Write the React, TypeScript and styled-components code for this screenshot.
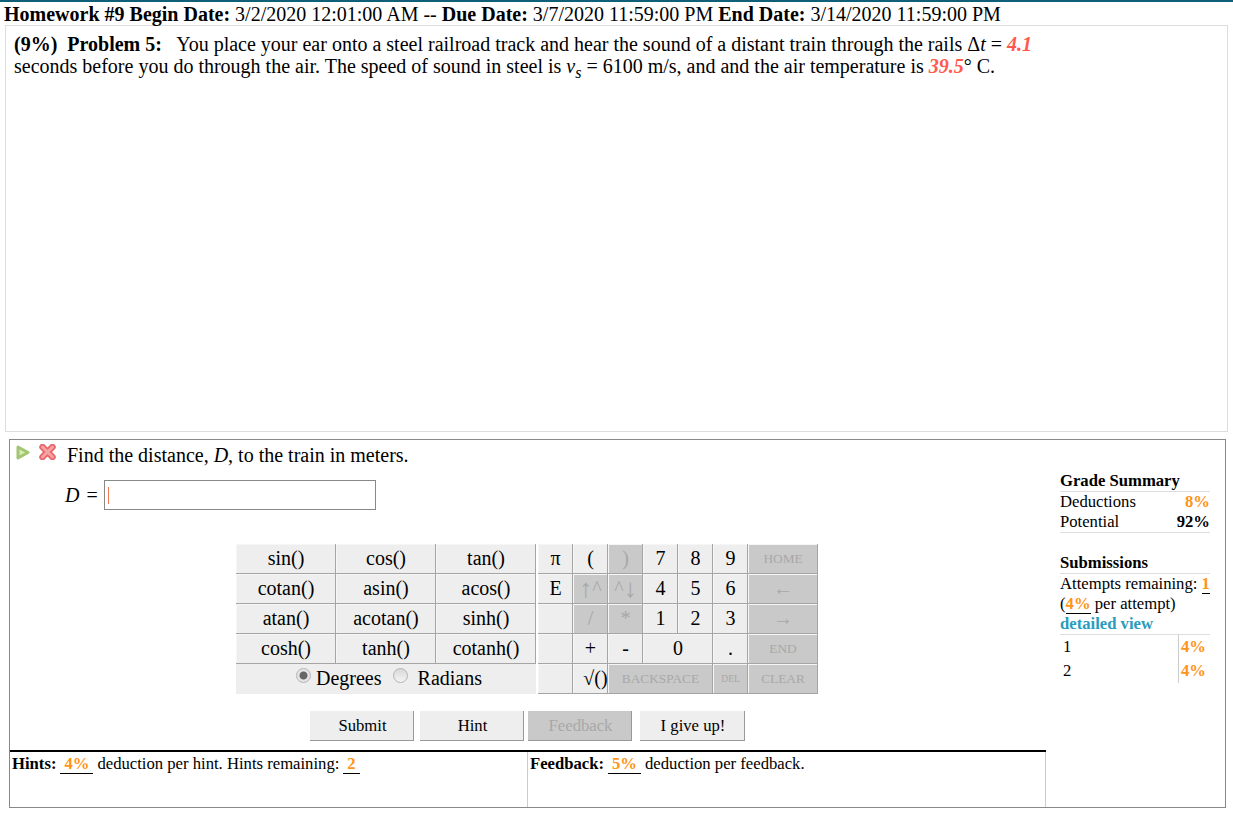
import styled, { createGlobalStyle } from 'styled-components';

const GlobalStyle = createGlobalStyle`
  html, body {
    margin: 0;
    padding: 0;
    background: #fff;
  }
  body {
    font-family: "Liberation Serif", "Times New Roman", serif;
    color: #000;
  }
  * {
    box-sizing: border-box;
  }
`;

const Page = styled.div`
  width: 1233px;
  height: 813px;
  overflow: hidden;
  border-top: 2px solid #0f5f78;
`;

const Header = styled.div`
  height: 23px;
  padding: 1px 0 0 4px;
  font-size: 20px;
  line-height: 22px;
  white-space: nowrap;
`;

const ProblemBox = styled.div`
  width: 1223px;
  height: 407px;
  margin-left: 5px;
  padding: 7px 8px;
  border: 1px solid #ddd;
  font-size: 20px;
  line-height: 22px;
  white-space: nowrap;
`;

const ProblemTitle = styled.b`
  margin-right: 10px;
`;

const Given = styled.b`
  color: #ff5a4d;
  font-style: italic;
`;

const Sub = styled.sub`
  font-size: 16px;
  line-height: 0;
`;

const QuestionBox = styled.div`
  display: flex;
  width: 1217px;
  height: 369px;
  margin: 7px 0 0 9px;
  border: 1px solid #888;
`;

const MainColumn = styled.div`
  display: flex;
  flex-direction: column;
  width: 1036px;
`;

const PromptRow = styled.div`
  display: flex;
  align-items: flex-start;
  height: 40px;
  padding: 4px 0 0 6px;
  font-size: 20px;
  line-height: 22px;
`;

const StatusIcons = styled.div`
  display: flex;
  gap: 9px;
  width: 51px;
`;

const AnswerRow = styled.div`
  display: flex;
  align-items: center;
  height: 30px;
  padding-left: 55px;
  font-size: 20px;
`;

const AnswerLabel = styled.span`
  width: 39px;
  word-spacing: 2px;
`;

const Answer = styled.div`
  display: flex;
  align-items: center;
  width: 272px;
  height: 30px;
  padding-left: 3px;
  border: 1px solid #888;
`;

const Caret = styled.span`
  width: 1px;
  height: 17px;
  background: #f47a52;
`;

const Keypad = styled.div`
  display: grid;
  grid-template-columns: repeat(3, 100px) 2px repeat(6, 35px) 70px;
  grid-auto-rows: 30px;
  width: 582px;
  margin: 34px 0 0 226px;
`;

const Key = styled.div<{ $off?: boolean; $span?: number; $size?: number; $start?: number }>`
  display: flex;
  align-items: center;
  justify-content: center;
  grid-column: ${(p) => (p.$start ? `${p.$start} / span ${p.$span || 1}` : `span ${p.$span || 1}`)};
  padding-left: 1px;
  background: ${(p) => (p.$off ? '#c9c9c9' : '#eee')};
  color: ${(p) => (p.$off ? '#a8a8a8' : '#000')};
  border-right: 1px solid #a5a5a5;
  border-bottom: 1px solid #a5a5a5;
  box-shadow: inset 1px 1px 0 #f6f6f6;
  font-size: ${(p) => p.$size || 20}px;
  white-space: nowrap;
`;

const Arrow = styled.span`
  font-size: 26px;
  line-height: 0;
`;

const RootLabel = styled.span`
  margin-left: 10px;
`;

const AngleCell = styled.div`
  display: flex;
  align-items: center;
  justify-content: center;
  grid-column: span 3;
  padding: 0 0 2px 6px;
  background: #eee;
  font-size: 20px;
`;

const Radio = styled.span<{ $on?: boolean }>`
  display: inline-block;
  width: 15px;
  height: 15px;
  margin: 0 5px 5px 0;
  border-radius: 50%;
  border: 1px solid #b4b4b4;
  background: ${(p) =>
    p.$on
      ? 'radial-gradient(circle, #666 0, #666 3.5px, #e4e4e4 4.5px)'
      : 'linear-gradient(#d8d8d8, #f4f4f4)'};
`;

const AngleLabel = styled.span<{ $gap?: number }>`
  margin-right: ${(p) => p.$gap || 0}px;
`;

const Actions = styled.div`
  display: flex;
  height: 30px;
  margin: 17px 0 0 300px;
`;

const ActionButton = styled.div<{ $off?: boolean; $w: number; $gap: number }>`
  display: flex;
  align-items: center;
  justify-content: center;
  width: ${(p) => p.$w}px;
  margin-right: ${(p) => p.$gap}px;
  padding-left: 2px;
  background: ${(p) => (p.$off ? '#c9c9c9' : '#eee')};
  color: ${(p) => (p.$off ? '#a8a8a8' : '#000')};
  border-right: 1px solid #999;
  border-bottom: 1px solid #999;
  font-size: 16.67px;
`;

const InfoRow = styled.div`
  display: flex;
  flex: 1;
  margin-top: 9px;
  border-top: 2px solid #000;
`;

const InfoCell = styled.div<{ $w: number }>`
  width: ${(p) => p.$w}px;
  padding: 2px 2px 0;
  border-right: 1px solid #ccc;
  font-size: 16.67px;
  line-height: 20px;
  white-space: nowrap;
`;

const Value = styled.span`
  display: inline-block;
  height: 20px;
  margin: 0 4px;
  padding: 0 4px;
  border-bottom: 1px solid #000;
  color: #ff9416;
  font-weight: bold;
  line-height: 20px;
`;

const Sidebar = styled.div`
  width: 150px;
  margin: 31px 0 0 14px;
  font-size: 16.67px;
  line-height: 20px;
`;

const SideTitle = styled.div`
  height: 21px;
  border-bottom: 1px solid #ddd;
  font-weight: bold;
`;

const SideRow = styled.div`
  display: flex;
  justify-content: space-between;
  height: 20px;
`;

const SideGroup = styled.div`
  margin-bottom: 20px;
  border-bottom: 1px solid #ddd;
`;

const SideLine = styled.div`
  height: 20px;
`;

const Orange = styled.b`
  color: #ff9416;
`;

const Detail = styled.div`
  height: 21px;
  border-bottom: 1px solid #ddd;
  color: #2a9cbc;
  font-weight: bold;
`;

const AttemptValue = styled.span`
  display: inline-block;
  height: 20px;
  border-bottom: 1px solid #000;
  vertical-align: top;
`;

const AttemptRow = styled.div`
  display: grid;
  grid-template-columns: 119px 31px;
  height: 24px;
  line-height: 24px;
`;

const AttemptIndex = styled.span`
  padding-left: 3px;
  border-right: 1px solid #ccc;
`;

const AttemptScore = styled.b`
  padding-left: 2px;
  color: #ff9416;
`;

function PlayIcon() {
  return (
    <svg width="14" height="16" viewBox="0 0 14 16">
      <path d="M2 3 L12 8.5 L2 14 Z" fill="#d8edb0" stroke="#a3c675" strokeWidth="3" strokeLinejoin="round" />
    </svg>
  );
}

function CrossIcon() {
  return (
    <svg width="17" height="16" viewBox="0 0 17 16">
      <path d="M3.5 3 L13.5 13 M13.5 3 L3.5 13" stroke="#e8666c" strokeWidth="6.5" strokeLinecap="round" />
      <path d="M3.5 3 L13.5 13 M13.5 3 L3.5 13" stroke="#f5a3a3" strokeWidth="3" strokeLinecap="round" />
    </svg>
  );
}

const functions = [
  ['sin()', 'cos()', 'tan()'],
  ['cotan()', 'asin()', 'acos()'],
  ['atan()', 'acotan()', 'sinh()'],
  ['cosh()', 'tanh()', 'cotanh()'],
];

export default function App() {
  return (
    <Page>
      <GlobalStyle />
      <Header>
        <b>Homework #9 Begin Date:</b> 3/2/2020 12:01:00 AM -- <b>Due Date:</b> 3/7/2020 11:59:00 PM{' '}
        <b>End Date:</b> 3/14/2020 11:59:00 PM
      </Header>
      <ProblemBox>
        <ProblemTitle>(9%)&nbsp; Problem 5:</ProblemTitle> You place your ear onto a steel railroad track and hear the
        sound of a distant train through the rails Δ<i>t</i> = <Given>4.1</Given>
        <br />
        seconds before you do through the air. The speed of sound in steel is <i>v</i>
        <Sub>
          <i>s</i>
        </Sub>{' '}
        = 6100 m/s, and and the air temperature is <Given>39.5</Given>° C.
      </ProblemBox>
      <QuestionBox>
        <MainColumn>
          <PromptRow>
            <StatusIcons>
              <PlayIcon />
              <CrossIcon />
            </StatusIcons>
            <span>
              Find the distance, <i>D</i>, to the train in meters.
            </span>
          </PromptRow>
          <AnswerRow>
            <AnswerLabel>
              <i>D</i> =
            </AnswerLabel>
            <Answer>
              <Caret />
            </Answer>
          </AnswerRow>
          <Keypad>
            {functions[0].map((f) => (
              <Key key={f}>{f}</Key>
            ))}
            <Key $start={5}>π</Key>
            <Key>(</Key>
            <Key $off>)</Key>
            <Key>7</Key>
            <Key>8</Key>
            <Key>9</Key>
            <Key $off $size={13.33}>HOME</Key>

            {functions[1].map((f) => (
              <Key key={f}>{f}</Key>
            ))}
            <Key $start={5}>E</Key>
            <Key $off>
              <Arrow>↑</Arrow>^
            </Key>
            <Key $off>
              ^<Arrow>↓</Arrow>
            </Key>
            <Key>4</Key>
            <Key>5</Key>
            <Key>6</Key>
            <Key $off>←</Key>

            {functions[2].map((f) => (
              <Key key={f}>{f}</Key>
            ))}
            <Key $start={5} />
            <Key $off>/</Key>
            <Key $off>*</Key>
            <Key>1</Key>
            <Key>2</Key>
            <Key>3</Key>
            <Key $off>→</Key>

            {functions[3].map((f) => (
              <Key key={f}>{f}</Key>
            ))}
            <Key $start={5} />
            <Key>+</Key>
            <Key>-</Key>
            <Key $span={2}>0</Key>
            <Key>.</Key>
            <Key $off $size={13.33}>END</Key>

            <AngleCell>
              <Radio $on />
              <AngleLabel $gap={11}>Degrees</AngleLabel>
              <Radio />
              <AngleLabel>&nbsp;Radians</AngleLabel>
            </AngleCell>
            <Key $start={5} />
            <Key>
              <RootLabel>√()</RootLabel>
            </Key>
            <Key $off $span={3} $size={13.33}>BACKSPACE</Key>
            <Key $off $size={9.5}>DEL</Key>
            <Key $off $size={13.33}>CLEAR</Key>
          </Keypad>
          <Actions>
            <ActionButton $w={104} $gap={6}>Submit</ActionButton>
            <ActionButton $w={104} $gap={4}>Hint</ActionButton>
            <ActionButton $w={104} $gap={8} $off>Feedback</ActionButton>
            <ActionButton $w={105} $gap={0}>I give up!</ActionButton>
          </Actions>
          <InfoRow>
            <InfoCell $w={518}>
              <b>Hints:</b>
              <Value>4%</Value>deduction per hint. Hints remaining:
              <Value>2</Value>
            </InfoCell>
            <InfoCell $w={518}>
              <b>Feedback:</b>
              <Value>5%</Value>deduction per feedback.
            </InfoCell>
          </InfoRow>
        </MainColumn>
        <Sidebar>
          <SideTitle>Grade Summary</SideTitle>
          <SideGroup>
            <SideRow>
              <span>Deductions</span>
              <Orange>8%</Orange>
            </SideRow>
            <SideRow>
              <span>Potential</span>
              <b>92%</b>
            </SideRow>
          </SideGroup>
          <SideTitle>Submissions</SideTitle>
          <SideLine>
            Attempts remaining:{' '}
            <AttemptValue>
              <Orange>1</Orange>
            </AttemptValue>
          </SideLine>
          <SideLine>
            (
            <AttemptValue>
              <Orange>4%</Orange>
            </AttemptValue>{' '}
            per attempt)
          </SideLine>
          <Detail>detailed view</Detail>
          <AttemptRow>
            <AttemptIndex>1</AttemptIndex>
            <AttemptScore>4%</AttemptScore>
          </AttemptRow>
          <AttemptRow>
            <AttemptIndex>2</AttemptIndex>
            <AttemptScore>4%</AttemptScore>
          </AttemptRow>
        </Sidebar>
      </QuestionBox>
    </Page>
  );
}
